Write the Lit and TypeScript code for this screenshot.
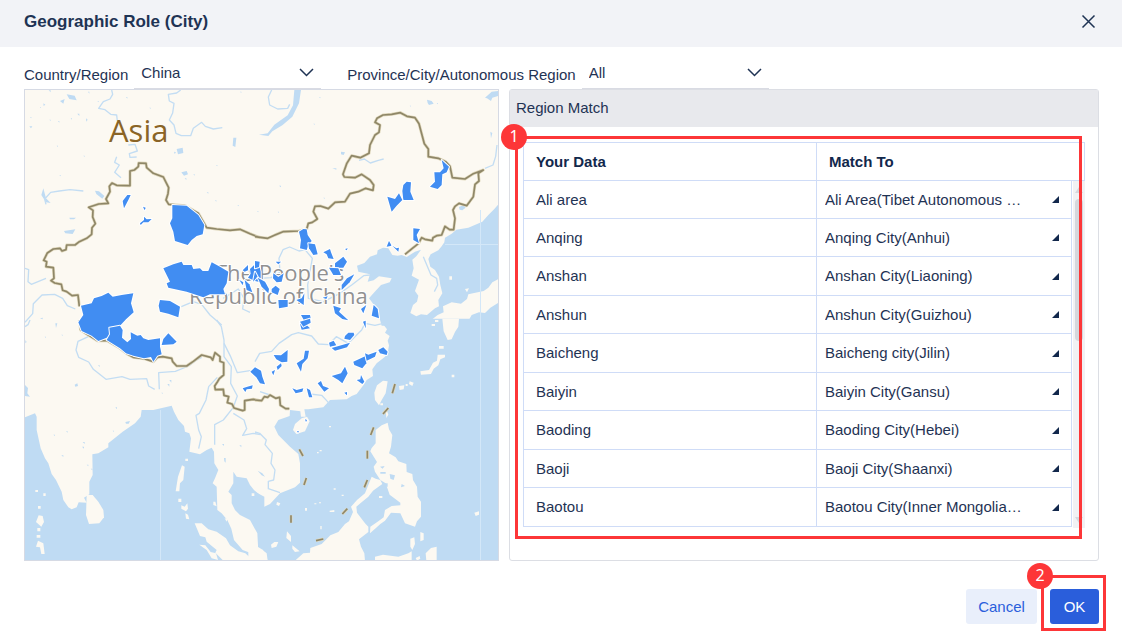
import { LitElement, html, svg, css } from "lit";
import { customElement, property } from "lit/decorators.js";

/* Map artwork is kept in four tiles, each drawn at three units per pixel. */
interface Tile {
  origin: string;
  sea: string[];
  land: string[];
  rivers: string[];
  lakes: string;
  border: string[];
  cities: string[];
}

const tiles: Tile[] = [
  {
    origin: "translate(60 255)",
    sea: [],
    land: [],
    rivers: [
      "M275 15 278 28 270 42 250 50 236 70 255 74 272 88 290 90 292 108",
      "M482 15 470 24 445 28 448 48 462 55 458 84 448 105 462 120 468 145 484 152 512 152 520 130 545 112 556 124 580 132 607 128",
      "M325 180 345 178 352 198 328 206 330 217 350 216",
      "M290 215 284 232 298 240 284 262 303 278",
      "M78 358 74 342 92 322 118 318 150 314 190 318",
      "M15 550 26 554 24 590 34 598 78 580",
      "M15 712 38 686 40 656 66 630 104 628 128 640 142 662 166 672",
      "M484 665 520 650 545 658 570 690 605 720",
      "M610 640 655 612 672 640 668 672 690 682",
    ],
    lakes:
      "M140 28l24 4 6 14-22-4zM120 48l14-6-4 14zM640 158l9 0-3 28-8-4zM470 192l18-4 2 16-16 4zM225 317l12 2 16 14-6 8-18-14zM132 438l34-5-8 14-22-2zM148 398l20 0-6 5-12 0zM70 310l8 30 14 14-14-2-14-22zM70 55l6 4-5 4zM86 16l6 0 0 6zM60 66l3 0 0 4zM30 96l4 0 0 4zM28 124l9 0-4 6zM88 104l4 0 0 4zM114 108l4 0 0 5zM152 100l4 0 0 4zM198 100l5 4-4 6zM172 86l6 0 0 7zM204 20l4 0 0 6zM232 48l4 0 0 4zM318 36l4 0 0 5zM388 68l4 0 0 4zM425 135l4 0 0 4zM462 200l6 2-4 5zM588 240l4 0 0 4zM484 262l16-4 4 10-12 4zM494 280l5 0 0 5zM560 322l5 0 0 4zM585 346l4 0 0 4zM118 270l4 0 0 4zM190 212l4 0 0 4zM110 182l4 0 0 4zM652 360l4 0 0 4zM60 700l8-2 0 5zM520 268l4 0 0 4zM660 20l4 0 0 4z",
    border: [
      "M178 664 174 630 156 632 140 620 128 616 124 598 104 594 93 587 102 580 100 548 78 545 80 530 71 526 82 504 100 492 120 490 126 498 138 494 140 480 165 480 178 470 200 460 215 448 216 428 226 416 218 396 219 376 206 367 236 357 265 355 258 342 270 320 268 304 276 294 290 301 330 302 330 258 343 255 355 245 356 234 378 235 380 248 400 265 430 276 438 292 446 308 444 326 438 345 446 358 495 362 535 385 560 428 590 432 630 436 660 433 690 446 720 458",
    ],
    cities: [
      "308,348 322,330 332,330 325,345 312,370",
      "369,365 377,368 374,376",
      "360,415 372,405 372,395 380,403 395,402 385,412 370,412 362,420",
      "457,360 500,362 535,390 553,420 548,448 530,453 515,465 503,480 465,468 460,440 450,415 457,400",
      "430,550 460,538 485,530 490,540 515,540 520,552 540,550 548,558 565,558 575,532 600,545 625,560 620,595 610,612 615,628 570,628 550,637 500,620 445,608 440,595 450,590",
      "420,645 450,648 480,665 475,697 445,686 420,680 416,662",
      "183,662 215,655 222,640 245,633 265,623 278,635 305,630 340,625 333,655 341,682 318,703 300,722 270,728 268,755 235,768 215,752 185,738 175,712 190,690",
      "260,765 270,748 268,728 300,722 308,735 306,758 322,772 333,762 332,742 352,752 362,750 370,760 385,765 420,760 420,785 425,808 412,812 400,830 393,816 372,820 340,812 318,805 300,790",
      "425,780 430,762 445,745 470,770 460,778",
      "690,552 715,528 722,560 722,592 705,588 684,578 692,566",
      "668,556 684,540 684,556 674,560",
      "658,585 670,592 668,601",
      "674,585 688,598 697,622 680,615",
    ],
  },
  {
    origin: "translate(765 255)",
    sea: [
      "M735 352 718 372 700 390 682 410 640 428 604 434 590 446 570 458 568 472 560 484 550 496 527 508 520 522 526 545 540 555 552 575 556 600 562 625 550 645 552 664 540 670 516 690 498 688 484 694 466 684 474 660 486 650 490 632 480 618 492 584 470 572 476 550 472 524 484 514 498 494 480 500 455 516 440 510 428 512 412 510 400 490 384 488 368 496 366 508 345 515 328 534 306 542 310 560 345 568 338 590 356 586 372 574 410 580 404 592 378 600 358 622 342 640 366 672 380 722H735Z",
    ],
    land: [
      "M735 580 712 592 700 608 686 618 640 628 636 642 618 656 590 652 564 664 566 682 548 690 528 706 532 722H620L640 708 650 690 672 682 690 684 706 668 735 650Z",
      "M583 574h8v10h-8zM630 612l12-2-6 12z",
    ],
    rivers: [
      "M50 15 40 36 44 60 68 72 98 70 104 58",
      "M312 226 328 222 346 234 370 226 386 222",
      "M15 580 48 578 75 562 72 520 84 494 104 486 132 498 150 494 172 520 165 560 158 600 160 640 205 650 255 625 290 600 326 572 345 570",
      "M690 250 714 240 722 214 726 180",
      "M505 515 528 570 545 580 548 600 538 620",
    ],
    lakes:
      "M118 15l20 0-6 40-20 40-30 26-30 18-12 14-28-4 26-4 20-26 40-28 16-30zM516 44l14 4 6 8-14 4-4-6zM690 38l20-18 22-2 0 14-20 6-4 10-12-8zM706 140l6 4-4 16zM258 200l12 2-4 8-8-2zM232 250l12 0 0 4zM175 116l4 0 0 4zM192 36l4 0 0 4zM72 302l6 0 0 5zM612 366l14-6 6 8-10 8-8-2zM545 54l4 0 0 4zM464 62l4 0 0 3zM205 338l4 0 0 4zM6 378l4 0 0 4zM68 380l4 0 0 4z",
    border: [
      "M0 455 38 460 60 450 84 440 132 438 155 433 160 415 172 412 187 402 175 380 180 364 196 363 220 371 240 352 270 350 285 326 310 320 332 310 354 316 356 300 345 285 320 268 300 278 268 276 264 268 275 236 290 212 316 218 342 205 345 180 360 150 372 142 375 120 360 112 366 100 384 90 410 88 436 83 456 94 480 98 492 116 500 146 508 176 520 192 520 215 550 220 572 230 585 244 592 278 630 282 655 266 685 255 670 265 672 288 660 298 655 335 635 362 612 355 600 364 594 375 600 400 596 434 584 434 570 424 560 450 545 452 534 458 532 467 510 463 500 458 490 476 472 490 450 508",
    ],
    cities: [
      "132,440 145,432 155,433 158,450 170,468 160,480 155,495 135,490 138,465",
      "160,475 180,478 188,508 175,510 162,490",
      "205,502 225,492 228,502 236,522 220,520 215,508",
      "240,535 265,515 276,530 265,548 240,548",
      "222,548 250,550 258,570 235,570",
      "298,568 284,592 260,615 260,600 276,580",
      "0,528 14,530 12,546 0,550",
      "0,560 8,575 -6,590",
      "8,578 30,590 42,612 40,625 20,605",
      "62,530 78,530 70,538",
      "55,565 70,576 86,565 80,590 65,592 54,580",
      "50,612 62,602 74,612 68,630 50,622",
      "70,645 98,645 98,665 72,670",
      "124,645 140,640 148,625 146,660",
      "203,638 218,634 214,642",
      "235,662 258,670 252,680 280,706 262,702 240,685",
      "318,672 334,660 325,685",
      "350,692 356,660 368,672 372,700",
      "138,690 165,690 168,705 155,720 165,730 140,734 135,716 148,708",
      "560,225 582,245 575,262 562,268 560,300 548,312 525,305 540,290 538,262 555,262 566,250",
      "445,300 455,290 468,292 466,320 476,345 445,345 442,318",
      "397,335 420,342 432,325 442,345 425,362 410,380",
      "475,430 495,432 485,450 492,475 475,465",
      "395,485 402,468 410,482",
      "412,482 424,490 432,488 430,500",
      "270,492 278,490 275,496",
    ],
  },
  {
    origin: "translate(60 960)",
    sea: [
      "M15 292 45 280 50 290 50 330 62 385 75 415 85 430 95 462 108 480 125 515 130 540 145 562 155 568 170 562 176 547 200 548 192 533 208 523 208 485 218 465 217 403 235 400 265 382 265 370 308 335 345 310 362 290 365 270 400 270 455 257 462 275 475 300 492 318 495 335 508 340 513 355 508 395 540 403 560 390 575 383 582 395 583 430 595 450 585 475 578 490 590 500 592 570 605 580 622 600 634 626 642 660 668 690 700 702 712 722H15Z",
      "M640 455 650 470 680 475 690 495 702 510 726 530V722H714L714 676 712 640 690 600 660 585 645 570 635 550 635 525 625 515 640 490Z",
      "M15 195 24 204 22 220 30 230 15 228Z",
    ],
    land: [
      "M200 525 218 525 235 545 250 570 252 592 238 610 207 612 198 585Z",
      "M524 610 545 610 565 628 590 635 618 655 630 676 655 694 676 700 700 722H610L586 698 590 690 560 665 556 652 540 648Z",
      "M538 674 556 676 572 696 588 700 594 720 575 715 560 690Z",
      "M486 436 494 440 490 480 480 490 478 514 467 514 474 470Z",
      "M475 536h9v10h-9zM484 556l10 4 8-10 2 16-6 8-14-8zM496 580l8 4 4 14-10-2zM580 545l6 0 4 14-10-4zM614 595l8 2-2 8zM496 416l8 0 0 7-8 0zM46 510h8v6h-8zM70 520h7v8h-7zM54 558h8v8h-8zM56 586l12 2 4 18-8 14-16-14zM52 624h9v10h-9zM50 645h11v8h-11zM54 662l16 8 4 32-10 0-4-20-12-2zM695 520h8v8h-8z",
    ],
    rivers: [
      "M205 50 174 64 168 90 176 112 206 126 220 148 258 178 306 170 330 178 380 176 386 198 404 208",
      "M418 208 416 158 466 154 506 138 530 120 545 112",
      "M592 172 566 200 558 240 538 280 528 286 536 330 544 350 536 386",
      "M590 0 604 20 612 60 612 110 634 140 632 190 652 228 640 262 610 300 584 314 584 374",
      "M612 70 632 110 652 158 690 152 710 156",
      "M640 280 672 300 680 326 668 346 700 340 722 344",
      "M15 20 24 14 30 0",
    ],
    lakes:
      "M106 10l6 0-4 14zM124 44l4 0 0 4zM16 60l4 6-4 4zM74 50l4 0 0 4zM164 194l8-4 2 8-8 2zM234 136l5 0 0 5zM286 262l5 0 0 6zM316 306l14-3-4 8-8 0zM278 332l4 0 0 4zM138 334l5 0 0 4zM100 344l5 0 0 4zM124 406l6 0 0 5zM188 366l6 0 0 6zM186 380l6 0 0 6zM200 434l5 0 0 5zM240 396l4 0 0 6zM212 446l5 0 0 5zM448 180l6 0 0 8zM442 192l6 0 0 8zM424 218l4 0 0 4zM606 372l6 0 0 6zM612 414l5 0 0 14-4-4zM658 376l6 0 0 6z",
    border: [
      "M178 0 182 30 200 42 232 62 262 62 300 85 322 102 340 112 372 116 400 125 412 112 428 110 455 115 458 125 470 138 500 138 520 124 545 105 572 112 578 120 585 98 600 110 600 124 611 128 611 165 598 176 592 186 584 198 586 209 610 208 612 226 626 230 622 248 636 252 642 264 668 272 674 270 674 242 700 238 720 242",
    ],
    cities: ["668,205 682,200 698,196 696,206 680,208 676,216"],
  },
  {
    origin: "translate(765 960)",
    sea: [
      "M378 -4 386 15 396 28 390 38 404 48 398 62 402 76 398 100 390 110 365 130 352 148 354 168 335 180 325 196 305 222 290 228 275 238 225 240 205 262 160 268 148 268 152 290 138 290 136 274 105 270 104 288 70 300 58 320 70 345 105 380 130 402 135 430 135 488 120 502 75 520 45 552 28 560 28 530 0 515V620L10 640 10 680 35 700 38 722H735V-4Z",
    ],
    land: [
      "M-20 650 0 640 8 680 24 690 38 722H-20Z",
      "M140 295 156 290 164 304 150 334 124 342 114 330 120 312Z",
      "M384 182 398 184 392 220 380 240 372 256 360 240 358 218 366 196Z",
      "M562 -4 566 34 578 60 590 58 600 36 610 20 612 -4Z",
      "M552 78l14 0 0 8-14 0zM530 12h10v6h-10zM540 0h10v6h-10zM548 104l22 0 0 8-14 6-6 18-14 10-8 16-30 2-2-10 26-4 12-22 12-6zM590 164l8 0 0 8-8 0zM432 198l16-2-2 12-12 2zM464 184l12 4-4 10-10-6zM452 192h6v6h-6z",
      "M380 316 398 308 402 328 412 345 408 380 402 400 422 412 430 424 454 432 455 456 472 462 474 480 486 500 488 530 498 545 498 590 486 604 480 620 450 610 436 580 408 578 390 602 376 612 362 625 345 640 346 620 370 604 386 592 390 570 410 558 436 556 436 548 404 524 392 490 376 480 360 455 356 440 366 426 346 394 350 384 362 370 362 330Z",
      "M392 262l8 22-6 10zM376 250h8v6h-8z",
      "M350 470 362 476 376 480 382 492 354 512 340 530 318 548 304 560 306 578 330 610 340 620 340 636 312 658 318 680 328 700 330 722H120L145 700 165 698 166 684 200 672 226 646 250 636 270 612 282 604 294 576 288 560 306 540 330 520Z",
      "M372 528l10 0 0 6-10 0zM496 636l10 4 0 20-10 4zM466 656l12-4 2 20-8 18-6-10zM360 710 384 704 430 710 460 700 470 694 470 722H360ZM514 722 512 700 528 684 545 680 545 722ZM482 714l12-6 2 8-10 6zM658 578l14-4 0 10-10 4zM96 634l12 14 0 18-14-12zM48 674l10-8 12 0-6 14-14 4zM112 676l22 18-14 2-8-10zM66 546l10 4-4 8-8-4z",
      "M222 318h6v4h-6zM194 390h6v4h-6zM186 396h5v4h-5zM236 505h6v4h-6zM260 524h6v4h-6zM150 564h6v8h-6zM224 572l14-2 0 6-14 0zM196 618h4v10h-4zM178 550h6v3h-6zM192 547h6v3h-6z",
    ],
    rivers: [
      "M0 125 14 100 50 94 72 70 110 44 130 38 170 48 190 72 220 74 244 50 280 70 320 30 330 10 360 16 385 10",
      "M0 336 14 340 34 360 30 374 52 400 48 430 60 450 56 480 40 484 40 506 75 518",
      "M15 215 45 225",
      "M165 222 200 226 215 242 222 250",
    ],
    lakes:
      "M8 452l14 8 8 10-10-4zM375 440l14-2-6 8zM404 462l16 4-4 14-10-4zM440 492l10 6-12 4zM390 490h8v10h-8zM376 456h16v5h-16z",
    border: [
      "M0 240 20 242 28 230 38 232 45 225 62 235 74 232 76 256 92 266 103 266",
      "M420 192 412 220",
      "M400 264 384 282",
      "M356 322 347 345",
      "M337 392V416",
      "M337 480 328 502",
      "M277 566 262 582",
      "M205 657 183 662",
      "M108 586V608",
      "M154 474 147 495",
      "M133 388 144 408",
    ],
    cities: [
      "135,5 165,-4 167,8 145,20",
      "324,5 332,2 332,25",
      "270,48 280,38 296,38 298,45 285,60 268,56",
      "222,68 236,62 244,76 225,80",
      "230,84 285,68 276,82 240,92",
      "56,105 78,106 98,90 97,125 80,127 64,118",
      "65,140 78,130 80,138 68,150",
      "50,155 60,150 55,166",
      "125,130 146,116 150,92 162,92 158,115 142,132 138,155",
      "295,125 332,108 334,130 322,145 298,135",
      "330,100 340,104 365,95 360,110 335,122",
      "370,90 385,82 398,95 395,105 375,100",
      "230,168 258,160 270,140 278,160 262,190 250,180",
      "305,180 316,178 318,165 328,185 322,192",
      "188,190 198,183 204,198 222,205 208,215",
      "112,205 125,210 145,205 142,215 122,220",
      "155,205 165,210 172,232 162,232",
      "0,142 18,152 22,170 30,193 15,190 4,172 -14,155",
      "150,298 156,300 153,306",
      "126,333 132,334 129,338",
      "268,218 276,216 276,226",
    ],
  },
];

@customElement("region-map")
export class RegionMap extends LitElement {
  static styles = css`
    :host {
      display: block;
      border: 1px solid #d6dae4;
    }
    .map {
      display: block;
      width: 100%;
      height: auto;
      background: #fcf9f2;
    }
    .sea {
      fill: #bfdbf3;
    }
    .land {
      fill: #fcf9f2;
    }
    .river {
      fill: none;
      stroke: #c3ddf3;
      stroke-width: 4;
      stroke-linejoin: round;
    }
    .halo {
      fill: none;
      stroke: #e0d8bc;
      stroke-width: 9;
      stroke-linejoin: round;
    }
    .border {
      fill: none;
      stroke: #8f8768;
      stroke-width: 5;
      stroke-linejoin: round;
    }
    .city {
      fill: #418df2;
      stroke: #ffffff;
      stroke-width: 6;
      stroke-linejoin: round;
      paint-order: stroke;
    }
    .grid-line {
      stroke: #d3e7f8;
      stroke-width: 1;
    }
    .continent {
      font: 31px "Open Sans", "Noto Sans", sans-serif;
      fill: #8a6426;
    }
    .country {
      font: 22px "Open Sans", "Noto Sans", sans-serif;
      fill: #919191;
      stroke: #ffffff;
      stroke-width: 2;
      paint-order: stroke;
    }
  `;

  render() {
    return html`
      <svg class="map" viewBox="25 90 473 470" role="img" aria-label="Map of matched regions">
        <g transform="scale(.33333)">
          ${tiles.map(
            (t) => svg`<g transform=${t.origin}>
              ${t.sea.map((d) => svg`<path class="sea" d=${d}></path>`)}
              ${t.land.map((d) => svg`<path class="land" d=${d}></path>`)}
              <path class="sea" d=${t.lakes}></path>
              ${t.rivers.map((d) => svg`<path class="river" d=${d}></path>`)}
            </g>`
          )}
          ${tiles.map(
            (t) => svg`<g transform=${t.origin}>
              ${t.border.map((d) => svg`<path class="halo" d=${d}></path>`)}
              ${t.border.map((d) => svg`<path class="border" d=${d}></path>`)}
            </g>`
          )}
        </g>
        <path class="grid-line" d="M160.500 410V560M480.500 210V560M445 244.500H498"></path>
        <text class="continent" x="109" y="142">Asia</text>
        <text class="country" y="281">
          <tspan x="215">The People's</tspan>
          <tspan x="189" dy="23">Republic of China</tspan>
        </text>
        <g transform="scale(.33333)">
          ${tiles.map(
            (t) => svg`<g transform=${t.origin}>
              ${t.cities.map((p) => svg`<polygon class="city" points=${p}></polygon>`)}
            </g>`
          )}
        </g>
      </svg>
    `;
  }
}

@customElement("line-select")
export class LineSelect extends LitElement {
  @property() label = "";
  @property() value = "";

  static styles = css`
    :host {
      display: flex;
      align-items: flex-end;
      gap: 6px;
    }
    label {
      line-height: 28px;
      white-space: nowrap;
    }
    .field {
      display: grid;
      width: 187px;
      align-items: center;
      border-bottom: 1px solid #d9dbe3;
    }
    select,
    svg {
      grid-area: 1 / 1;
    }
    select {
      appearance: none;
      width: 100%;
      height: 31px;
      padding: 0 32px 0 7px;
      border: 0;
      background: none;
      color: inherit;
      font: inherit;
    }
    svg {
      justify-self: end;
      margin-right: 7px;
      pointer-events: none;
    }
  `;

  render() {
    return html`
      <label for="choice">${this.label}</label>
      <div class="field">
        <select id="choice">
          <option>${this.value}</option>
        </select>
        <svg width="15" height="9" viewBox="0 0 15 9" fill="none" stroke="#1f3354" stroke-width="1.5">
          <path d="M1 1l6.500 6.500L14 1"></path>
        </svg>
      </div>
    `;
  }
}

const rows: [string, string][] = [
  ["Ali area", "Ali Area(Tibet Autonomous …"],
  ["Anqing", "Anqing City(Anhui)"],
  ["Anshan", "Anshan City(Liaoning)"],
  ["Anshun", "Anshun City(Guizhou)"],
  ["Baicheng", "Baicheng city(Jilin)"],
  ["Baiyin", "Baiyin City(Gansu)"],
  ["Baoding", "Baoding City(Hebei)"],
  ["Baoji", "Baoji City(Shaanxi)"],
  ["Baotou", "Baotou City(Inner Mongolia…"],
];

@customElement("app-root")
export class AppRoot extends LitElement {
  static styles = css`
    :host {
      display: block;
      min-height: 100vh;
      background: #ffffff;
      color: #1f3354;
      font: 15px/20px "Liberation Sans", Arial, sans-serif;
    }
    * {
      box-sizing: border-box;
    }
    .title-bar {
      display: flex;
      align-items: center;
      justify-content: space-between;
      height: 47px;
      padding: 0 22px 4px 24px;
      background: #f2f3f7;
    }
    h1 {
      margin: 0;
      font-size: 17px;
      line-height: 24px;
    }
    .close {
      display: flex;
      padding: 4px;
      border: 0;
      background: none;
    }
    .filters {
      display: flex;
      align-items: flex-end;
      gap: 26px;
      height: 42px;
      padding: 0 24px;
    }
    .content {
      display: grid;
      grid-template-columns: 475fr 590fr;
      gap: 10px;
      padding: 0 23px 0 24px;
    }
    .panel {
      border: 1px solid #dcdee4;
      border-radius: 3px;
    }
    h2 {
      margin: 0;
      padding: 8px 6px 9px;
      background: #e8e9ed;
      font-size: 15px;
      font-weight: normal;
      line-height: 20px;
    }
    .matches {
      position: relative;
      margin: 15px 13px 0;
    }
    table {
      width: 100%;
      table-layout: fixed;
      border-collapse: collapse;
    }
    .source {
      width: 293px;
    }
    .gutter {
      width: 13px;
    }
    th,
    td {
      height: 38px;
      padding: 0 12px;
      border: 1px solid #cfdcf7;
      text-align: left;
    }
    th {
      color: #12284c;
    }
    tbody tr:nth-child(2n + 3) td {
      height: 39px;
    }
    .target {
      padding: 0 12px 0 8px;
    }
    .pick {
      display: grid;
      align-items: center;
    }
    .pick select,
    .pick svg {
      grid-area: 1 / 1;
    }
    .pick select {
      appearance: none;
      width: 100%;
      padding: 0;
      border: 0;
      background: none;
      color: inherit;
      font: inherit;
    }
    .pick svg {
      justify-self: end;
      pointer-events: none;
    }
    .scrollbar {
      position: absolute;
      top: 39px;
      right: 0;
      bottom: -1px;
      display: flex;
      flex-direction: column;
      align-items: center;
      width: 12px;
      padding: 6px 0 5px;
      background: #f1f1f4;
    }
    .thumb {
      width: 8px;
      height: 142px;
      margin: 6px 0 auto;
      border-radius: 4px;
      background: #d5d7dd;
    }
    .frame {
      position: absolute;
      border: 3px solid #fd3638;
      pointer-events: none;
    }
    .frame-matches {
      inset: -6px 3px -12px -8px;
    }
    .frame-confirm {
      inset: -14px -7px -7px -9px;
    }
    .badge {
      position: absolute;
      top: -15px;
      left: -17px;
      width: 26px;
      height: 26px;
      border-radius: 50%;
      background: #fd3638;
      color: #ffffff;
      font: 16px/24px "Noto Sans", sans-serif;
      text-align: center;
    }
    .actions {
      display: flex;
      justify-content: flex-end;
      gap: 13px;
      padding: 28px 23px 9px;
    }
    .confirm {
      position: relative;
    }
    .button {
      display: block;
      height: 35px;
      padding: 0;
      border: 0;
      border-radius: 3px;
      font: inherit;
    }
    .cancel {
      min-width: 71px;
      background: #e9effb;
      color: #2a5edb;
    }
    .ok {
      min-width: 49px;
      background: #2a5edb;
      color: #ffffff;
    }
  `;

  render() {
    return html`
      <header class="title-bar">
        <h1>Geographic Role (City)</h1>
        <button class="close" aria-label="Close">
          <svg width="15" height="15" viewBox="0 0 15 15" fill="none" stroke="#1f3354" stroke-width="1.500">
            <path d="M1.500 1.500l12 12M13.500 1.500l-12 12"></path>
          </svg>
        </button>
      </header>
      <div class="filters">
        <line-select label="Country/Region" value="China"></line-select>
        <line-select label="Province/City/Autonomous Region" value="All"></line-select>
      </div>
      <main class="content">
        <region-map></region-map>
        <section class="panel">
          <h2>Region Match</h2>
          <div class="matches">
            <table>
              <colgroup>
                <col class="source" />
                <col />
                <col class="gutter" />
              </colgroup>
              <thead>
                <tr>
                  <th>Your Data</th>
                  <th colspan="2">Match To</th>
                </tr>
              </thead>
              <tbody>
                ${rows.map(
                  ([source, target]) => html`<tr>
                    <td>${source}</td>
                    <td class="target">
                      <div class="pick">
                        <select aria-label=${`Match for ${source}`}>
                          <option>${target}</option>
                        </select>
                        <svg width="7" height="7" viewBox="0 0 7 7" fill="#12284c">
                          <path d="M7 0v7H0z"></path>
                        </svg>
                      </div>
                    </td>
                  </tr>`
                )}
              </tbody>
            </table>
            <div class="scrollbar">
              <svg width="8" height="6" viewBox="0 0 8 6" fill="#d5d7dd"><path d="M4 0l4 6H0z"></path></svg>
              <div class="thumb"></div>
              <svg width="8" height="6" viewBox="0 0 8 6" fill="#d5d7dd"><path d="M0 0h8L4 6z"></path></svg>
            </div>
            <div class="frame frame-matches"><span class="badge">1</span></div>
          </div>
        </section>
      </main>
      <footer class="actions">
        <button class="button cancel">Cancel</button>
        <div class="confirm">
          <button class="button ok">OK</button>
          <div class="frame frame-confirm"><span class="badge">2</span></div>
        </div>
      </footer>
    `;
  }
}
